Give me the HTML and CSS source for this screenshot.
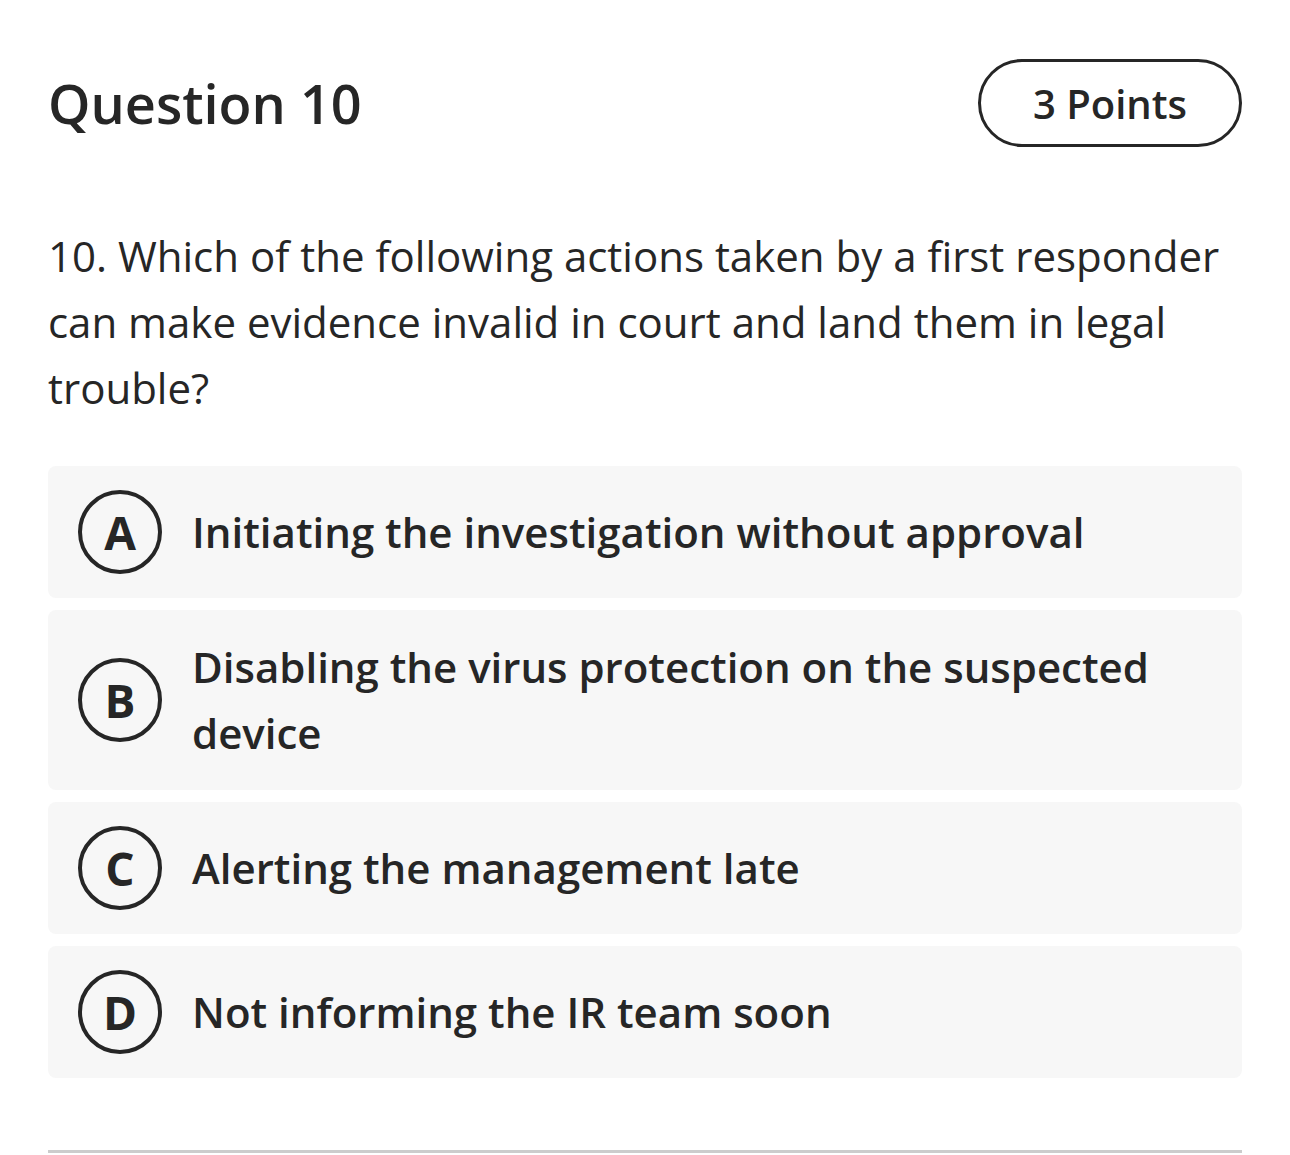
FILE: index.html
```html
<!DOCTYPE html>
<html lang="en">
<head>
<meta charset="utf-8">
<title>Question 10</title>
<link rel="stylesheet" href="styles.css">
</head>
<body>
<main class="quiz">
  <header class="quiz-header">
    <h1 class="quiz-title">Question 10</h1>
    <span class="points">3 Points</span>
  </header>
  <p class="question">10. Which of the following actions taken by a first responder can make evidence invalid in court and land them in legal trouble?</p>
  <ul class="options">
    <li class="option"><span class="letter">A</span><span class="option-text">Initiating the investigation without approval</span></li>
    <li class="option"><span class="letter">B</span><span class="option-text">Disabling the virus protection on the suspected device</span></li>
    <li class="option"><span class="letter">C</span><span class="option-text">Alerting the management late</span></li>
    <li class="option"><span class="letter">D</span><span class="option-text">Not informing the IR team soon</span></li>
  </ul>
  <hr class="divider">
</main>
</body>
</html>
```
FILE: styles.css
```css
* { box-sizing: border-box; }
html, body { margin: 0; padding: 0; background: #fff; }
body {
  font-family: "Open Sans", "Noto Sans", sans-serif;
  color: #262626;
}
.quiz {
  padding: 59px 48px 0 48px;
  display: flex;
  flex-direction: column;
}
.quiz-header {
  display: flex;
  justify-content: space-between;
  align-items: center;
}
.quiz-title {
  margin: 0;
  font-size: 54px;
  font-weight: 600;
  line-height: 88px;
}
.points {
  display: flex;
  align-items: center;
  justify-content: center;
  height: 88px;
  width: 264px;
  border: 3px solid #262626;
  border-radius: 44px;
  font-size: 40px;
  font-weight: 600;
}
.question {
  margin: 76px 0 45px 0;
  font-size: 42px;
  line-height: 66px;
  font-weight: 400;
}
.options {
  list-style: none;
  margin: 0;
  padding: 0;
  display: flex;
  flex-direction: column;
  gap: 12px;
}
.option {
  display: flex;
  align-items: center;
  gap: 30px;
  background: #f7f7f7;
  border-radius: 8px;
  padding: 24px 60px 24px 30px;
}
.letter {
  flex: none;
  width: 84px;
  height: 84px;
  border: 4px solid #262626;
  border-radius: 50%;
  display: flex;
  align-items: center;
  justify-content: center;
  font-size: 46px;
  font-weight: 700;
  line-height: 1;
}
.option-text {
  font-size: 42px;
  font-weight: 600;
  line-height: 66px;
}
.divider {
  margin: 72px 0 0 0;
  border: 0;
  height: 3px;
  background: #cccccc;
}
```
